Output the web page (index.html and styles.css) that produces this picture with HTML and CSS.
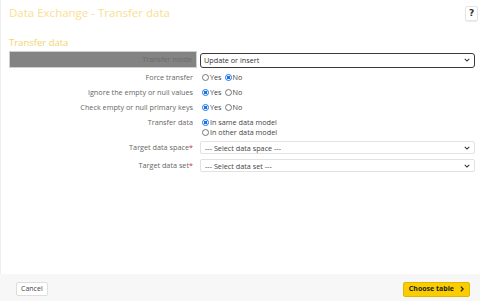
FILE: index.html
```html
<!DOCTYPE html>
<html>
<head>
<meta charset="utf-8">
<link rel="stylesheet" href="styles.css">
</head>
<body>
<div class="page">
  <main class="main">
    <header class="head">
      <h1 class="title">Data Exchange - Transfer data</h1>
      <button class="help">?</button>
    </header>
    <h2 class="section">Transfer data</h2>
    <div class="form">
      <div class="label label-hl">Transfer mode</div>
      <div class="ctrl"><div class="select select-dark"><span>Update or insert</span><svg class="chev" viewBox="0 0 8 5"><path d="M1 1 L4 4 L7 1" fill="none" stroke="#333" stroke-width="1.4"/></svg></div></div>

      <div class="label">Force transfer</div>
      <div class="ctrl radios"><label class="opt"><span class="radio"></span>Yes</label><label class="opt"><span class="radio on"></span>No</label></div>

      <div class="label">Ignore the empty or null values</div>
      <div class="ctrl radios"><label class="opt"><span class="radio on"></span>Yes</label><label class="opt"><span class="radio"></span>No</label></div>

      <div class="label">Check empty or null primary keys</div>
      <div class="ctrl radios"><label class="opt"><span class="radio on"></span>Yes</label><label class="opt"><span class="radio"></span>No</label></div>

      <div class="label">Transfer data</div>
      <div class="ctrl stack"><label class="opt"><span class="radio on"></span>In same data model</label><label class="opt"><span class="radio"></span>In other data model</label></div>

      <div class="label lbl-sel">Target data space<span class="req">*</span></div>
      <div class="ctrl sel-row"><div class="select"><span>--- Select data space ---</span><svg class="chev" viewBox="0 0 8 5"><path d="M1 1 L4 4 L7 1" fill="none" stroke="#333" stroke-width="1.4"/></svg></div></div>

      <div class="label lbl-sel lbl-sel2">Target data set<span class="req">*</span></div>
      <div class="ctrl sel-row sel-row2"><div class="select"><span>--- Select data set ---</span><svg class="chev" viewBox="0 0 8 5"><path d="M1 1 L4 4 L7 1" fill="none" stroke="#333" stroke-width="1.4"/></svg></div></div>
    </div>
  </main>
  <footer class="foot">
    <button class="btn">Cancel</button>
    <button class="btn btn-primary">Choose table <svg class="arr" viewBox="0 0 4 6"><path d="M0.8 0.6 L3.2 3 L0.8 5.4" fill="none" stroke="#222" stroke-width="1.3"/></svg></button>
  </footer>
</div>
</body>
</html>
```
FILE: styles.css
```css
* { box-sizing: border-box; }
html, body { margin: 0; padding: 0; }
body {
  width: 480px; height: 301px; overflow: hidden;
  font-family: "Open Sans", "DejaVu Sans", sans-serif;
  background: #fff; color: #333;
}
.page { display: flex; flex-direction: column; height: 301px; }
.main { flex: 1; border-left: 1px solid #eee; }
.head { display: flex; justify-content: space-between; align-items: flex-start; padding: 5px 2px 0 8px; height: 31px; }
.title { margin: 0; font-weight: 400; font-size: 11.5px; line-height: 16px; color: #f8e08f; }
.help {
  width: 13px; height: 15px; margin-top: 1px; padding: 0;
  border: 1px solid #e4e4e4; border-radius: 2px; background: #fff;
  box-shadow: 0 1px 1px rgba(0,0,0,0.08);
  font-family: "DejaVu Sans", sans-serif; font-weight: 700; font-size: 9px; color: #333; line-height: 13px;
}
.section { margin: 0 0 0 8px; font-weight: 400; font-size: 9.5px; line-height: 14px; color: #f4d46c; height: 20px; padding-top: 5px; }
.form {
  display: grid; grid-template-columns: 188px 1fr; column-gap: 3px;
  margin: 0 5px 0 8px; font-size: 7.25px; color: #666;
}
.label { text-align: right; padding-right: 4px; height: 15px; line-height: 15px; white-space: nowrap; }
.label-hl { background: #838383; color: #6b6b6b; border: 1px solid #cfcfcf; height: 17px; line-height: 15px; margin-bottom: 1px; }
.label:not(.label-hl):not(.lbl-sel) { line-height: 16px; }
.ctrl { display: flex; align-items: center; }
.radios { height: 15px; padding-top: 1px; }
.stack { flex-direction: column; align-items: flex-start; padding-top: 3px; height: 23px; }
.stack .opt { height: 10px; }
.opt { display: flex; align-items: center; color: #444; margin-right: 1px; line-height: 10px; }
.radio {
  width: 7px; height: 7px; border-radius: 50%; border: 1px solid #767676; background: #fff;
  margin: 0 1px 0 2px; flex: none;
}
.radio.on { border: 1.5px solid #1a73e8; background: radial-gradient(circle, #1a73e8 0 1.6px, #fff 2px); }
.select {
  flex: 1; display: flex; align-items: center; justify-content: space-between;
  height: 13px; border: 1px solid #e2e2e2; border-radius: 2px; background: #fff;
  padding: 0 4px 0 4px; color: #444;
}
.select-dark { height: 15px; border: 1.5px solid #3a3a3a; border-radius: 3px; color: #333; padding-left: 3px; }
.chev { width: 6px; height: 4px; }
.lbl-sel { margin-top: 4px; height: 13px; line-height: 13px; }
.sel-row { margin-top: 4px; height: 13px; }
.lbl-sel2, .sel-row2 { margin-top: 5px; }
.req { color: #d32f2f; }
.foot {
  height: 27px; background: #f7f7f7; display: flex; justify-content: space-between; align-items: center;
  padding: 0 10px 0 16px;
}
.btn {
  height: 14px; padding: 0 4px; border: 1px solid #dedede; border-radius: 2px; background: #fff;
  font-family: "Open Sans", sans-serif; font-size: 7px; color: #444; line-height: 12px; margin-top: 3px;
}
.btn-primary {
  display: flex; align-items: center; gap: 6px; background: #f9cd00; border-color: #e0b800;
  font-weight: 700; color: #222; padding: 0 5px 0 5px; height: 15px;
}
.arr { width: 4px; height: 6px; }
```
